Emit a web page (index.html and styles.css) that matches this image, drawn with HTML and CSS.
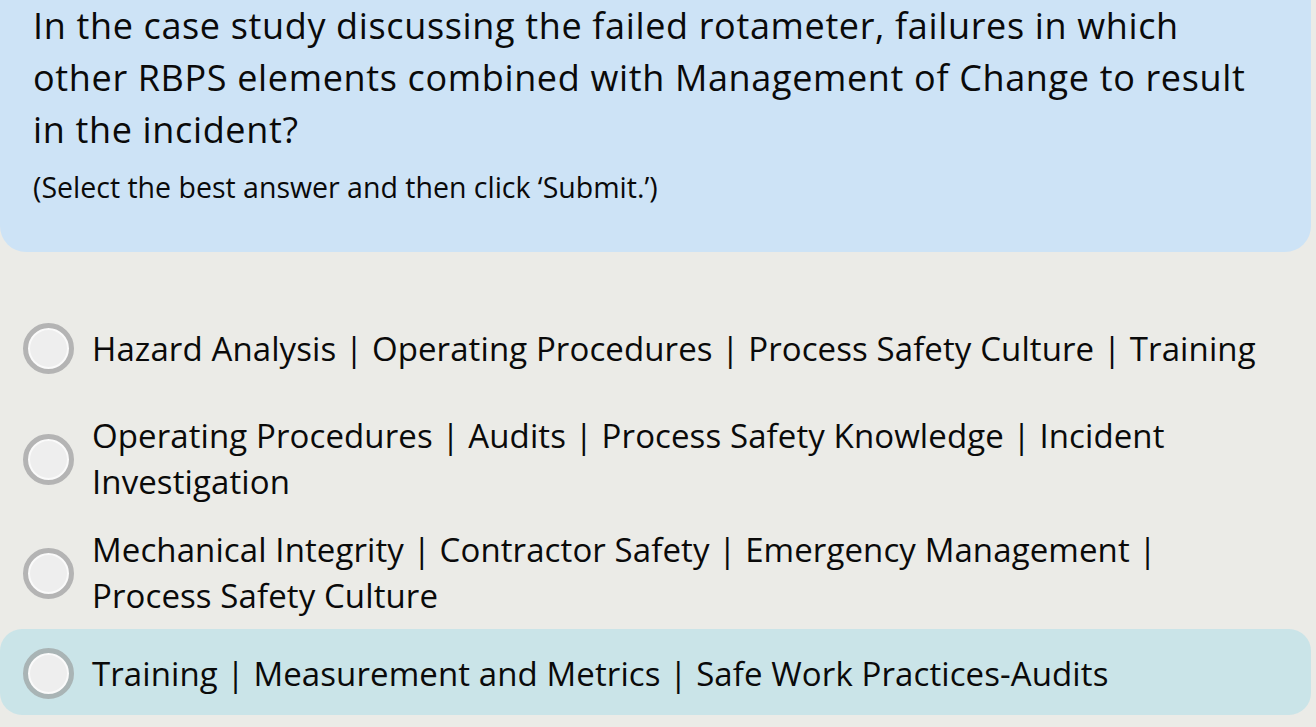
FILE: index.html
```html
<!DOCTYPE html>
<html lang="en">
<head>
<meta charset="utf-8">
<title>Quiz</title>
<link rel="stylesheet" href="styles.css">
</head>
<body>
<div class="page">
  <header class="question">
    <p class="question-text">In the case study discussing the failed rotameter, failures in which<br>other RBPS elements combined with Management of Change to result<br>in the incident?</p>
    <p class="instruction">(Select the best answer and then click ‘Submit.’)</p>
  </header>
  <div class="options">
    <label class="option option-1">
      <span class="radio"></span>
      <span class="option-text">Hazard Analysis | Operating Procedures | Process Safety Culture | Training</span>
    </label>
    <label class="option option-2">
      <span class="radio"></span>
      <span class="option-text">Operating Procedures | Audits | Process Safety Knowledge | Incident Investigation</span>
    </label>
    <label class="option option-3">
      <span class="radio"></span>
      <span class="option-text">Mechanical Integrity | Contractor Safety | Emergency Management | Process Safety Culture</span>
    </label>
    <label class="option option-4 is-hover">
      <span class="radio"></span>
      <span class="option-text">Training | Measurement and Metrics | Safe Work Practices-Audits</span>
    </label>
  </div>
</div>
</body>
</html>
```

FILE: styles.css
```css
html, body {
  margin: 0;
  padding: 0;
}
body {
  background: #ebebe7;
  font-family: "Open Sans", "Lato", sans-serif;
  color: #0a0a0a;
  width: 1316px;
  height: 727px;
  overflow: hidden;
}
.page {
  width: 1311px;
}
.question {
  background: #cde3f6;
  border-radius: 0 0 26px 26px;
  height: 252px;
  box-sizing: border-box;
  padding: 0 10px 0 33px;
}
.question-text {
  margin: 0;
  font-size: 36px;
  line-height: 52px;
  letter-spacing: 0.65px;
}
.instruction {
  margin: 14px 0 0;
  font-size: 28.5px;
  line-height: 34px;
}
.options {
  display: flex;
  flex-direction: column;
}
.option {
  display: flex;
  align-items: center;
  gap: 18px;
  padding: 0 40px 0 23px;
  border-radius: 22px;
}
.option-1 { margin-top: 71px; }
.option-2 { margin-top: 39px; }
.option-3 { margin-top: 22px; }
.option-4 { margin-top: 10px; padding-top: 19px; padding-bottom: 16px; }
.option.is-hover {
  background: #cae4e8;
}
.radio {
  flex: none;
  width: 51px;
  height: 51px;
  box-sizing: border-box;
  border-radius: 50%;
  border: 5px solid #b4b4b4;
  background: #eeeeee;
  box-shadow: inset 0 0 0 2px #fafafa;
}
.is-hover .radio {
  border-color: #a9b4b5;
}
.option-text {
  font-size: 33px;
  line-height: 46px;
  letter-spacing: 0.1px;
}
```
